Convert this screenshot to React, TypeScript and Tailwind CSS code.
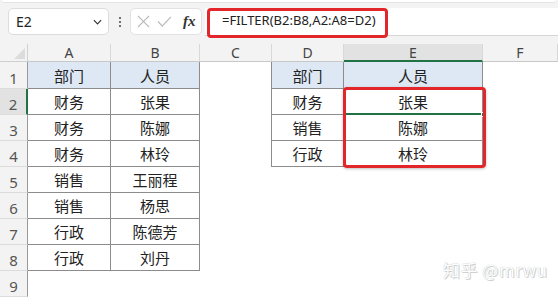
import React from "react";

const cjk = "font-['Microsoft_YaHei','Noto_Sans_CJK_SC',sans-serif]";

const cols = ["A", "B", "C", "D", "E", "F"];

// sheet contents by row (row 1..9), columns A..F
const data: string[][] = [
  ["部门", "人员", "", "部门", "人员", ""],
  ["财务", "张果", "", "财务", "张果", ""],
  ["财务", "陈娜", "", "销售", "陈娜", ""],
  ["财务", "林玲", "", "行政", "林玲", ""],
  ["销售", "王丽程", "", "", "", ""],
  ["销售", "杨思", "", "", "", ""],
  ["行政", "陈德芳", "", "", "", ""],
  ["行政", "刘丹", "", "", "", ""],
  ["", "", "", "", "", ""],
];

function inTable(r: number, c: number) {
  if (r < 0 || c < 0) return false;
  if ((c === 0 || c === 1) && r <= 7) return true;
  if ((c === 3 || c === 4) && r <= 3) return true;
  return false;
}

function Toolbar() {
  return (
    <div className="relative h-[44px] bg-[#f3f3f3]">
      <div className="h-[3px] bg-white rounded-b-[6px] mx-[2px] border-b border-[#e4e4e4]" />
      <div className="flex items-center h-[41px] pb-[4px]">
        {/* name box */}
        <div className="ml-[8px] w-[101px] h-[27px] bg-white border border-[#dcdcdc] rounded-[5px] flex items-center justify-between pl-[7px] pr-[6px]">
          <span className="text-[14px] text-[#222] font-['Noto_Sans',sans-serif]">E2</span>
          <svg viewBox="0 0 10 6" className="w-[9px] h-[6px]" fill="none" stroke="#333" strokeWidth="1.3">
            <path d="M1 1l4 4 4-4" />
          </svg>
        </div>
        <div className="w-[21px] flex flex-col items-center gap-[2px]">
          <span className="w-[2px] h-[2px] bg-[#444] rounded-full" />
          <span className="w-[2px] h-[2px] bg-[#444] rounded-full" />
          <span className="w-[2px] h-[2px] bg-[#444] rounded-full" />
        </div>
        {/* cancel / enter / fx */}
        <div className="w-[72px] h-[27px] bg-white border border-[#e2e2e2] rounded-[5px] flex items-center pl-[6px] gap-[7px]">
          <svg viewBox="0 0 14 14" className="w-[13px] h-[13px]" fill="none" stroke="#b8b8b8" strokeWidth="1.3">
            <path d="M1 1l12 12M13 1L1 13" />
          </svg>
          <svg viewBox="0 0 16 12" className="w-[15px] h-[11px]" fill="none" stroke="#b8b8b8" strokeWidth="1.3">
            <path d="M1 6l4.5 5L15 1" />
          </svg>
          <span className="ml-[4px] text-[15px] italic font-['Liberation_Serif',serif] font-bold text-[#333] leading-none">
            fx
          </span>
        </div>
        {/* formula input */}
        <div className="ml-[3px] flex-1 h-[28px] bg-white border-b border-[#d6d6d6] flex items-center pl-[17px]">
          <span className="text-[13px] text-[#222] font-['Noto_Sans',sans-serif]">=FILTER(B2:B8,A2:A8=D2)</span>
        </div>
      </div>
      {/* highlight around formula */}
      <div className="absolute left-[207px] top-[8px] w-[181px] h-[30px] border-[3px] border-[#e2262a] rounded-[4px]" />
    </div>
  );
}

function Sheet() {
  return (
    <div className="relative grid grid-cols-[28px_83px_89px_72px_72px_139px_1fr] grid-rows-[18px_27px_repeat(8,26px)]">
      {/* corner */}
      <div className="bg-[#f3f3f3] border-r border-b border-[#d0d0d0] relative">
        <svg viewBox="0 0 12 12" className="absolute right-[2px] bottom-[2px] w-[11px] h-[11px]">
          <path d="M12 0V12H0z" fill="#dcdcdc" />
        </svg>
      </div>
      {cols.map((c) => (
        <div
          key={c}
          className={`flex items-center justify-center text-[14px] text-[#444] font-['Noto_Sans',sans-serif] border-r border-[#d8d8d8] ${
            c === "E" ? "bg-[#e2e2e2] border-b-2 border-b-[#217346]" : "bg-[#f3f3f3] border-b border-b-[#c8c8c8]"
          }`}
        >
          {c}
        </div>
      ))}
      {data.map((row, r) => (
        <React.Fragment key={r}>
          <div
            className={`flex items-end justify-center text-[15px] leading-[20px] text-[#555] font-['Noto_Sans',sans-serif] border-b border-[#dcdcdc] ${
              r === 1 ? "bg-[#e2e2e2] border-r-2 border-r-[#217346]" : "bg-[#f3f3f3] border-r border-r-[#9a9a9a]"
            }`}
          >
            {r + 1}
          </div>
          {row.map((v, c) => {
            const t = inTable(r, c);
            const br = t || inTable(r, c + 1);
            const bb = t || inTable(r + 1, c);
            const head = t && r === 0;
            return (
              <div
                key={c}
                className={`flex items-center justify-center pt-[2px] text-[15px] text-[#222] ${cjk} ${
                  head ? "bg-[#dde8f4]" : "bg-white"
                } ${br ? "border-r border-r-[#8c8c8c]" : ""} ${bb ? "border-b border-b-[#8c8c8c]" : ""}`}
              >
                {v}
              </div>
            );
          })}
        </React.Fragment>
      ))}
      {/* active cell E2 */}
      <div className="absolute left-[343px] top-[44px] w-[141px] h-[27px] border-b-2 border-[#217346]" />
      <div className="absolute left-[481px] top-[68px] w-[5px] h-[5px] bg-[#217346] border border-white" />
      {/* highlight around spilled result */}
      <div className="absolute left-[343px] top-[43px] w-[143px] h-[81px] border-[3px] border-[#e2262a] rounded-[4px] shadow-[0_1px_3px_rgba(0,0,0,0.25)]" />
      {/* watermark */}
      <div
        className={`absolute left-[443px] top-[213px] text-[17px] text-white tracking-[0.5px] ${cjk} [text-shadow:0_0_1px_#b0b0b0,1px_1px_0_#d4d4d4]`}
      >
        知乎 @mrwu
      </div>
    </div>
  );
}

export default function App() {
  return (
    <div className="w-[558px] h-[297px] overflow-hidden bg-white">
      <Toolbar />
      <Sheet />
    </div>
  );
}
